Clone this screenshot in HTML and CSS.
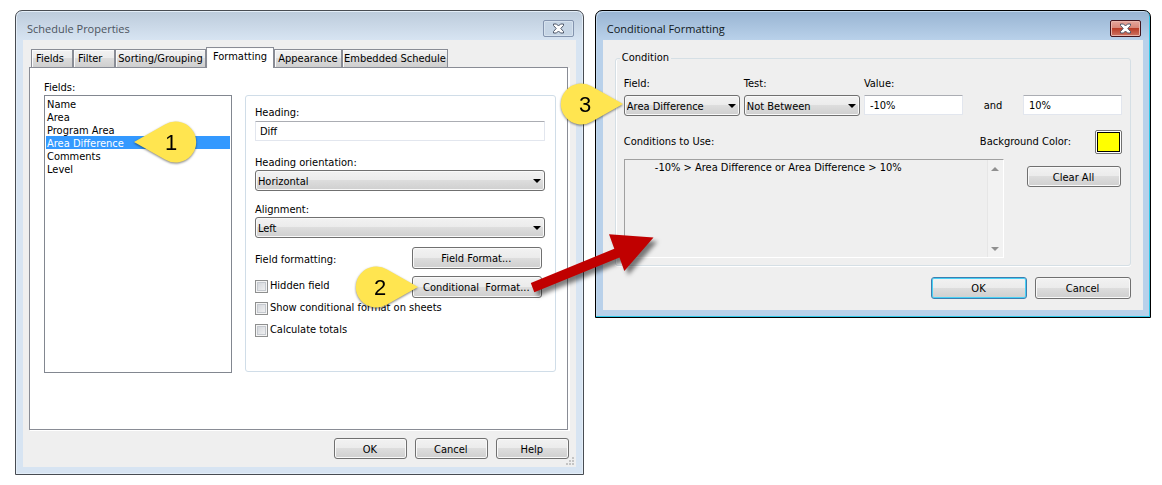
FILE: index.html
```html
<!DOCTYPE html>
<html lang="en">
<head>
    <meta charset="UTF-8">
    <meta name="viewport" content="width=device-width, initial-scale=1.0">
    <title>Schedule Properties</title>
    <link rel="stylesheet" href="styles.css">
</head>
<body>
    <main class="desktop">
        <section class="window">
            <header class="titlebar">
                <h1>Schedule Properties</h1>
                <button class="close" aria-label="Close">
                    <svg width="13" height="11" viewBox="0 0 13 11"><path d="M1.500 1h3l2 2 2-2h3v1.500L8.800 5.500l2.700 3v1.500h-3l-2-2-2 2h-3V8.500l2.700-3-2.700-3z"/></svg>
                </button>
            </header>
            <div class="client">
                <div class="tabs" role="tablist">
                    <button class="tab" role="tab">Fields</button>
                    <button class="tab" role="tab">Filter</button>
                    <button class="tab long" role="tab">Sorting/Grouping</button>
                    <button class="tab active" role="tab" aria-selected="true">Formatting</button>
                    <button class="tab long" role="tab">Appearance</button>
                    <button class="tab long" role="tab">Embedded Schedule</button>
                </div>
                <div class="pane">
                    <label class="list-label" for="fields">Fields:</label>
                    <select class="listbox" id="fields" size="21">
                        <option>Name</option>
                        <option>Area</option>
                        <option>Program Area</option>
                        <option selected>Area Difference</option>
                        <option>Comments</option>
                        <option>Level</option>
                    </select>
                    <div class="group">
                        <div class="field">
                            <label for="heading">Heading:</label>
                            <input class="text" type="text" id="heading" value="Diff">
                        </div>
                        <div class="field">
                            <label for="orientation">Heading orientation:</label>
                            <div class="combo">
                                <select id="orientation"><option>Horizontal</option><option>Vertical</option></select>
                            </div>
                        </div>
                        <div class="field">
                            <label for="alignment">Alignment:</label>
                            <div class="combo">
                                <select id="alignment"><option>Left</option><option>Center</option><option>Right</option></select>
                            </div>
                        </div>
                        <div class="row">
                            <span class="row-label">Field formatting:</span>
                            <button class="btn wide">Field Format...</button>
                        </div>
                        <div class="row">
                            <label class="check"><input type="checkbox">Hidden field</label>
                            <button class="btn wide">Conditional&nbsp; Format...</button>
                        </div>
                        <label class="check"><input type="checkbox">Show conditional format on sheets</label>
                        <label class="check"><input type="checkbox">Calculate totals</label>
                    </div>
                </div>
                <footer class="buttons">
                    <button class="btn">OK</button>
                    <button class="btn">Cancel</button>
                    <button class="btn">Help</button>
                </footer>
                <svg class="grip" width="9" height="9" viewBox="0 0 9 9"><path d="M6 0h2v2H6zM3 3h2v2H3zM6 3h2v2H6zM0 6h2v2H0zM3 6h2v2H3zM6 6h2v2H6z"/></svg>
            </div>
        </section>

        <section class="window front">
            <header class="titlebar">
                <h1>Conditional Formatting</h1>
                <button class="close" aria-label="Close">
                    <svg width="13" height="11" viewBox="0 0 13 11"><path d="M1.500 1h3l2 2 2-2h3v1.500L8.800 5.500l2.700 3v1.500h-3l-2-2-2 2h-3V8.500l2.700-3-2.700-3z"/></svg>
                </button>
            </header>
            <div class="client">
                <fieldset class="condition">
                    <legend>Condition</legend>
                    <div class="rule">
                        <label for="field">Field:</label>
                        <label for="test">Test:</label>
                        <label class="value-label" for="from">Value:</label>
                        <div class="combo">
                            <select id="field"><option>Area Difference</option></select>
                        </div>
                        <div class="combo">
                            <select id="test"><option>Not Between</option><option>Between</option></select>
                        </div>
                        <input class="text" type="text" id="from" value="-10%">
                        <label class="and" for="to">and</label>
                        <input class="text" type="text" id="to" value="10%">
                    </div>
                    <div class="color-row">
                        <label for="conditions">Conditions to Use:</label>
                        <label class="color-label" for="color">Background Color:</label>
                        <input class="swatch" type="color" id="color" value="#ffff00">
                    </div>
                    <div class="conditions-row">
                        <div class="conditions">
                            <textarea id="conditions" readonly>-10% &gt; Area Difference or Area Difference &gt; 10%</textarea>
                            <div class="scrollbar">
                                <svg width="8" height="5" viewBox="0 0 8 5"><path d="M4 0l4 4H0z"/></svg>
                                <svg width="8" height="5" viewBox="0 0 8 5"><path d="M0 0h8L4 4z"/></svg>
                            </div>
                        </div>
                        <button class="btn clear">Clear All</button>
                    </div>
                </fieldset>
                <footer class="buttons">
                    <button class="btn default">OK</button>
                    <button class="btn">Cancel</button>
                </footer>
            </div>
        </section>

        <!-- numbered steps -->
        <svg class="pin pin-1" width="66" height="48" viewBox="0 0 66 48">
            <path d="M2 23L33 5.500A20.500 20.500 0 1 1 33 40.500Z"/>
            <text x="39" y="31">1</text>
        </svg>
        <svg class="pin pin-2" width="66" height="48" viewBox="0 0 66 48">
            <path d="M64 23L33 5.500A20.500 20.500 0 1 0 33 40.500Z"/>
            <text x="26" y="31">2</text>
        </svg>
        <svg class="pin pin-3" width="66" height="48" viewBox="0 0 66 48">
            <path d="M64 23L33 5.500A20.500 20.500 0 1 0 33 40.500Z"/>
            <text x="26" y="31">3</text>
        </svg>
        <svg class="arrow" width="140" height="74" viewBox="0 0 140 74">
            <path d="M5.800 53L89.300 18.700L84 4.300L128.500 7.500L99.300 41L94.500 27.500L9.300 62.300Z"/>
        </svg>
    </main>
</body>
</html>
```
FILE: styles.css
```css
:root {
    --ui: "DejaVu Sans Condensed", Roboto, sans-serif;
    --title: "Open Sans", "Noto Sans", sans-serif;
    --face: #efefef;
    --glass: #d7e4f2;
    --edge: #707070;
}
* {
    box-sizing: border-box;
}
body {
    margin: 0;
    background: #fff;
    color: #000;
    font: 11px/14px var(--ui);
}
button, input, select, textarea {
    font: inherit;
    color: inherit;
    margin: 0;
}
.desktop {
    position: relative;
    display: flex;
    align-items: flex-start;
    gap: 11px;
    padding: 10px 11px 10px 15px;
}

/* windows */
.window {
    flex: 569 1 0;
    padding: 0 7px 7px;
    border: 1px solid #484c52;
    border-radius: 7px 7px 0 0;
    background: linear-gradient(#bccbdb, var(--glass) 29px);
    box-shadow: inset 0 0 0 1px #e4eef8;
}
.window.front {
    flex-grow: 556;
    border-color: #000;
    background: linear-gradient(#98b4d2, #b9d1ea 29px);
    box-shadow: inset -1px -1px 0 #2fc8e8, inset 1px 1px 0 #c3d9ee;
}
.titlebar {
    display: flex;
    justify-content: space-between;
    align-items: center;
    height: 29px;
    padding: 6px 2px 0 4px;
}
.titlebar h1 {
    margin: 0;
    color: #4c545e;
    font: 11px/16px var(--title);
}
.front .titlebar h1 {
    color: #101820;
}
.close {
    display: flex;
    align-items: center;
    justify-content: center;
    width: 31px;
    height: 17px;
    padding: 0;
    border: 1px solid #8494ae;
    border-radius: 2px;
    background: #c6d5e5;
    box-shadow: inset 0 0 0 1px #d6e2ee;
}
.close path {
    fill: #fff;
    stroke: #4d5668;
}
.front .close {
    border-color: #43141c;
    background: linear-gradient(#e5a79d, #d88678 47%, #b93d28 50%, #cf7563);
    box-shadow: inset 0 0 0 1px #e9b5ab;
}
.client {
    position: relative;
    padding: 7px 6px 8px;
    background: var(--face);
}
.front .client {
    padding: 11px 12px;
}

/* tabs */
.tabs {
    display: grid;
    grid-template-columns: 42px 42px 91px 68px 68px 106px;
    align-items: end;
    height: 20px;
    padding-left: 2px;
}
.tab {
    height: 18px;
    padding: 1px 0 0 4px;
    border: 1px solid #898c95;
    border-bottom: 0;
    background: linear-gradient(#f2f2f2, #ebebeb 50%, #dcdcdc 50%, #cfcfcf);
    box-shadow: inset 1px 1px 0 #fbfbfb;
    line-height: 16px;
    text-align: left;
    white-space: nowrap;
}
.tab.long {
    padding-left: 0;
    text-align: center;
}
.tab.active {
    position: relative;
    height: 21px;
    margin-bottom: -1px;
    padding: 0 0 2px 6px;
    background: #fff;
}
.pane {
    display: grid;
    grid-template-columns: 188fr 311fr;
    column-gap: 13px;
    margin-right: 2px;
    padding: 12px 11px 56px 14px;
    border: 1px solid #898c95;
    background: #fff;
    box-shadow: 1px 1px 0 #fff, 2px 1px 0 #fff;
}
.list-label {
    grid-column: 1 / 3;
    height: 15px;
    padding-top: 1px;
}
.listbox {
    align-self: start;
    width: 100%;
    height: 278px;
    padding: 1px;
    border: 1px solid #828790;
    border-radius: 0;
    outline: 0;
    background: #fff;
    overflow: hidden;
}
.listbox option {
    height: 13px;
    min-height: 13px;
    padding: 1px 1px 0;
    line-height: 13px;
}
.listbox option:checked {
    background: #39f linear-gradient(#39f, #39f);
    color: #fff;
}

/* form parts */
.group {
    align-self: start;
    padding: 8px 10px 31px 9px;
    border: 1px solid #d0dde8;
    border-radius: 3px;
}
.field {
    display: flex;
    flex-direction: column;
    margin-bottom: 10px;
}
.field label {
    padding-top: 2px;
}
.text {
    width: 100%;
    height: 20px;
    padding: 0 5px;
    border: 1px solid #e2e6ee;
    border-top-color: #abadb3;
    border-radius: 1px;
    background: #fff;
}
.field .text {
    margin: 1px 0 3px;
    padding-left: 4px;
}
.combo {
    position: relative;
}
.combo select {
    display: block;
    appearance: none;
    width: 100%;
    height: 21px;
    padding: 2px 20px 0 2px;
}
.combo::after {
    content: "";
    position: absolute;
    top: 9px;
    right: 4px;
    border: solid transparent;
    border-width: 4px 4px 0;
    border-top-color: #000;
}
.btn, .combo select {
    border: 1px solid var(--edge);
    border-radius: 3px;
    background: linear-gradient(#f2f2f2, #ebebeb 50%, #dddddd 50%, #cfcfcf);
    box-shadow: inset 0 0 0 1px #f9f9f9;
}
.btn {
    width: 73px;
    height: 21px;
    padding: 2px 1px 0 0;
}
.btn.wide {
    width: 130px;
    height: 22px;
}
.row {
    display: flex;
    justify-content: space-between;
    height: 22px;
    margin-right: 3px;
}
.row + .row {
    margin-top: 7px;
}
.field + .row {
    margin-top: -1px;
}
.row-label {
    line-height: 26px;
}
.check {
    display: flex;
    align-items: center;
    gap: 2px;
    height: 20px;
}
.check + .check {
    margin-top: 2px;
}
.check input {
    appearance: none;
    width: 13px;
    height: 13px;
    border: 1px solid #8e8f8f;
    background: linear-gradient(135deg, #cdd0d6, #f6f6f6);
    box-shadow: inset 0 0 0 1px #f4f4f4, inset 0 0 0 2px #c5c9cf;
}
.buttons {
    display: flex;
    justify-content: flex-end;
    gap: 8px;
    margin: 8px 1px 0 0;
}
.grip {
    position: absolute;
    right: 1px;
    bottom: 1px;
    fill: #c4c4c4;
}

/* conditional formatting */
.condition {
    min-width: 0;
    margin: 0;
    padding: 11px 8px 7px;
    border: 1px solid #d5dfe5;
    border-radius: 3px;
    box-shadow: inset 1px 0 0 #fff, 0 1px 0 #fff;
}
.condition legend {
    margin-left: -4px;
    padding: 0 2px;
}
.rule {
    display: grid;
    grid-template-columns: 116fr 116fr 99fr 52fr 99fr;
    gap: 4px;
}
.rule label {
    padding-top: 1px;
}
.value-label {
    grid-column: 3 / 6;
}
.and {
    line-height: 20px;
    text-align: center;
}
.color-row {
    display: flex;
    align-items: center;
    height: 24px;
    margin: 14px 0 5px;
}
.color-label {
    margin: 0 24px 0 auto;
}
.swatch {
    appearance: none;
    width: 27px;
    height: 24px;
    padding: 1px;
    border: 1px solid var(--edge);
    border-radius: 2px;
    background: #fff;
}
.swatch::-webkit-color-swatch-wrapper {
    padding: 0;
}
.swatch::-webkit-color-swatch {
    border: 1px solid #000;
    border-radius: 0;
}
.conditions-row {
    display: flex;
    justify-content: space-between;
    align-items: flex-start;
}
.conditions {
    display: flex;
    flex: 0 1 380px;
    height: 99px;
    border: 1px solid #fff;
    border-top-color: #a0a0a0;
    border-left-color: #a0a0a0;
}
.conditions textarea {
    flex: 1;
    padding: 1px 0 0 30px;
    border: 0;
    outline: 0;
    background: none;
    resize: none;
}
.scrollbar {
    display: flex;
    flex-direction: column;
    align-items: center;
    justify-content: space-between;
    width: 16px;
    padding: 7px 0 5px;
    background: #f2f2f2;
    box-shadow: inset 1px 0 0 #e6e6e6;
    fill: #909090;
}
.clear {
    width: 94px;
    margin: 7px 1px 0 0;
}
.front .buttons {
    margin: 11px 0 0;
}
.front .buttons .btn {
    width: 96px;
    height: 22px;
}
.btn.default {
    border-color: #3c7fb1;
    box-shadow: inset 0 0 0 1px #48d0f5;
}

/* callouts */
.pin, .arrow {
    position: absolute;
    pointer-events: none;
}
.pin {
    fill: #ffe550;
    filter: drop-shadow(0 1px 1px rgba(0, 0, 0, .5));
}
.pin text {
    fill: #000;
    font: 22px "Liberation Sans", sans-serif;
    text-anchor: middle;
}
.pin-1 {
    left: 132px;
    top: 119px;
}
.pin-2 {
    left: 354px;
    top: 264px;
}
.pin-3 {
    left: 559px;
    top: 81px;
}
.arrow {
    left: 525px;
    top: 230px;
    fill: #c00000;
    filter: drop-shadow(4px 4px 2px rgba(0, 0, 0, .5));
    overflow: visible;
}
```
